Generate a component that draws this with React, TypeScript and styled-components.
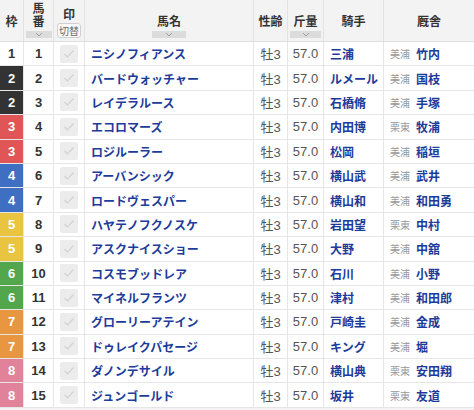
import React from "react";
import styled, { createGlobalStyle } from "styled-components";

const Global = createGlobalStyle`
  html, body { margin: 0; padding: 0; background: #f4f4f4; }
  body { font-family: "Noto Sans CJK JP", "Noto Sans", sans-serif; }
`;

const COLS = "24px 30px 31px 169px 34px 36px 60px 90px";

const Table = styled.div`
  width: 474px;
  background: #fff;
`;

const HeadRow = styled.div`
  display: grid;
  grid-template-columns: ${COLS};
  height: 42px;
  background: #f3f3f3;
  border-bottom: 1px solid #dedede;
  box-sizing: border-box;
`;

const HeadCell = styled.div<{ $bottom?: boolean }>`
  display: flex;
  flex-direction: column;
  align-items: center;
  justify-content: ${(p) => (p.$bottom ? "flex-end" : "center")};
  padding-bottom: ${(p) => (p.$bottom ? "3px" : "0")};
  box-sizing: border-box;
  border-right: 1px solid #e2e2e2;
  font-size: 12px;
  font-weight: 700;
  color: #333;
  line-height: 13px;
  &:last-child { border-right: none; }
`;

const HeadText = styled.span<{ $narrow?: boolean }>`
  display: block;
  line-height: 13px;
  text-align: center;
  width: ${(p) => (p.$narrow ? "12px" : "auto")};
  word-break: break-all;
`;

const SortBar = styled.div<{ $w: number }>`
  width: ${(p) => p.$w}px;
  height: 7px;
  margin-top: 4px;
  background: #dcdcdc;
  display: flex;
  align-items: center;
  justify-content: center;
`;

const SwitchBtn = styled.div`
  margin-top: 3px;
  width: 24px;
  height: 15px;
  border: 1px solid #cfcfcf;
  border-radius: 3px;
  background: #fafafa;
  font-size: 10px;
  font-weight: 400;
  color: #666;
  display: flex;
  align-items: center;
  justify-content: center;
  box-sizing: border-box;
`;

const Row = styled.div`
  display: grid;
  grid-template-columns: ${COLS};
  height: 24.4px;
  border-bottom: 1px solid #e6e6e6;
  box-sizing: border-box;
`;

const Cell = styled.div<{ $align?: string }>`
  display: flex;
  align-items: center;
  justify-content: ${(p) => p.$align || "center"};
  border-right: 1px solid #e6e6e6;
  font-size: 13px;
  color: #444;
  white-space: nowrap;
  overflow: hidden;
  &:last-child { border-right: none; }
`;

const FRAME: Record<number, [string, string]> = {
  1: ["#ffffff", "#333"],
  2: ["#333333", "#fff"],
  3: ["#e05656", "#fff"],
  4: ["#3f6fc3", "#fff"],
  5: ["#e9c440", "#fff"],
  6: ["#52a64c", "#fff"],
  7: ["#e8963f", "#fff"],
  8: ["#e2829a", "#fff"],
};

const FrameCell = styled(Cell)<{ $bg: string; $fg: string }>`
  background: ${(p) => p.$bg};
  color: ${(p) => p.$fg};
  font-family: "Liberation Sans", Arial, sans-serif;
  font-weight: 700;
  font-size: 13px;
`;

const NumCell = styled(Cell)`
  font-family: "Liberation Sans", Arial, sans-serif;
  font-weight: 700;
  color: #333;
`;

const Check = styled.div`
  width: 18px;
  height: 18px;
  background: #ececec;
  border-radius: 2px;
  display: flex;
  align-items: center;
  justify-content: center;
`;

const Name = styled.span`
  color: #1d3b9a;
  font-weight: 700;
  font-size: 12px;
  padding-left: 6px;
`;

const Plain = styled.span`
  font-family: "Liberation Sans", "Noto Sans CJK JP", sans-serif;
  font-size: 13px;
  color: #555;
`;

const Region = styled.span`
  font-size: 10px;
  color: #999;
  padding-left: 6px;
  margin-right: 6px;
`;

const TrainerName = styled.span`
  color: #1d3b9a;
  font-weight: 700;
  font-size: 12px;
`;

const Chevron = () => (
  <svg width="8" height="5" viewBox="0 0 8 5">
    <path d="M1 1 L4 4 L7 1" fill="none" stroke="#999" strokeWidth="0.9" />
  </svg>
);

const CheckMark = () => (
  <svg width="12" height="10" viewBox="0 0 12 10">
    <path d="M1.5 5 L4.5 8 L10.5 1.5" fill="none" stroke="#d2d2d2" strokeWidth="1.2" />
  </svg>
);

const rows: [number, number, string, string, string, string][] = [
  [1, 1, "ニシノフィアンス", "三浦", "美浦", "竹内"],
  [2, 2, "バードウォッチャー", "ルメール", "美浦", "国枝"],
  [2, 3, "レイデラルース", "石橋脩", "美浦", "手塚"],
  [3, 4, "エコロマーズ", "内田博", "栗東", "牧浦"],
  [3, 5, "ロジルーラー", "松岡", "美浦", "稲垣"],
  [4, 6, "アーバンシック", "横山武", "美浦", "武井"],
  [4, 7, "ロードヴェスパー", "横山和", "美浦", "和田勇"],
  [5, 8, "ハヤテノフクノスケ", "岩田望", "栗東", "中村"],
  [5, 9, "アスクナイスショー", "大野", "美浦", "中舘"],
  [6, 10, "コスモブッドレア", "石川", "美浦", "小野"],
  [6, 11, "マイネルフランツ", "津村", "美浦", "和田郎"],
  [7, 12, "グローリーアテイン", "戸崎圭", "美浦", "金成"],
  [7, 13, "ドゥレイクパセージ", "キング", "美浦", "堀"],
  [8, 14, "ダノンデサイル", "横山典", "栗東", "安田翔"],
  [8, 15, "ジュンゴールド", "坂井", "栗東", "友道"],
];

export default function App() {
  return (
    <>
      <Global />
      <Table>
        <HeadRow>
          <HeadCell>枠</HeadCell>
          <HeadCell $bottom>
            <HeadText $narrow>馬番</HeadText>
            <SortBar $w={26}>
              <Chevron />
            </SortBar>
          </HeadCell>
          <HeadCell $bottom>
            <HeadText>印</HeadText>
            <SwitchBtn>切替</SwitchBtn>
          </HeadCell>
          <HeadCell $bottom>
            <HeadText>馬名</HeadText>
            <SortBar $w={34}>
              <Chevron />
            </SortBar>
          </HeadCell>
          <HeadCell>性齢</HeadCell>
          <HeadCell $bottom>
            <HeadText>斤量</HeadText>
            <SortBar $w={31}>
              <Chevron />
            </SortBar>
          </HeadCell>
          <HeadCell>騎手</HeadCell>
          <HeadCell>厩舎</HeadCell>
        </HeadRow>
        {rows.map(([w, n, name, jockey, region, trainer]) => (
          <Row key={n}>
            <FrameCell $bg={FRAME[w][0]} $fg={FRAME[w][1]}>
              {w}
            </FrameCell>
            <NumCell>{n}</NumCell>
            <Cell>
              <Check>
                <CheckMark />
              </Check>
            </Cell>
            <Cell $align="flex-start">
              <Name>{name}</Name>
            </Cell>
            <Cell>
              <Plain>牡3</Plain>
            </Cell>
            <Cell>
              <Plain>57.0</Plain>
            </Cell>
            <Cell $align="flex-start">
              <Name>{jockey}</Name>
            </Cell>
            <Cell $align="flex-start">
              <Region>{region}</Region>
              <TrainerName>{trainer}</TrainerName>
            </Cell>
          </Row>
        ))}
      </Table>
    </>
  );
}
